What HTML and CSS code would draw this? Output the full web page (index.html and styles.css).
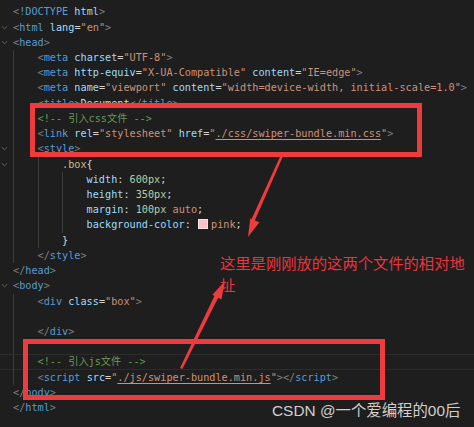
FILE: index.html
```html
<!DOCTYPE html>
<html lang="zh">
<head>
  <meta charset="UTF-8">
  <title>swiper 引入</title>
  <link rel="stylesheet" href="styles.css">
</head>
<body>
  <div class="editor">
    <div class="ln"><span class="gut"></span><span class="code"><span class="p">&lt;</span><span class="t">!DOCTYPE</span> <span class="a">html</span><span class="p">&gt;</span></span></div>
    <div class="ln"><span class="gut"><svg class="fold" viewBox="0 0 8 5"><polyline points="1,1 4,4 7,1"/></svg></span><span class="code"><span class="p">&lt;</span><span class="t">html</span> <span class="a">lang</span><span class="o">=</span><span class="s">"en"</span><span class="p">&gt;</span></span></div>
    <div class="ln"><span class="gut"><svg class="fold" viewBox="0 0 8 5"><polyline points="1,1 4,4 7,1"/></svg></span><span class="code"><span class="p">&lt;</span><span class="t">head</span><span class="p">&gt;</span></span></div>
    <div class="ln"><span class="gut"></span><span class="code"><span class="ind"></span><span class="p">&lt;</span><span class="t">meta</span> <span class="a">charset</span><span class="o">=</span><span class="s">"UTF-8"</span><span class="p">&gt;</span></span></div>
    <div class="ln"><span class="gut"></span><span class="code"><span class="ind"></span><span class="p">&lt;</span><span class="t">meta</span> <span class="a">http-equiv</span><span class="o">=</span><span class="s">"X-UA-Compatible"</span> <span class="a">content</span><span class="o">=</span><span class="s">"IE=edge"</span><span class="p">&gt;</span></span></div>
    <div class="ln"><span class="gut"></span><span class="code"><span class="ind"></span><span class="p">&lt;</span><span class="t">meta</span> <span class="a">name</span><span class="o">=</span><span class="s">"viewport"</span> <span class="a">content</span><span class="o">=</span><span class="s">"width=device-width, initial-scale=1.0"</span><span class="p">&gt;</span></span></div>
    <div class="ln"><span class="gut"></span><span class="code"><span class="ind"></span><span class="p">&lt;</span><span class="t">title</span><span class="p">&gt;</span><span class="o">Document</span><span class="p">&lt;/</span><span class="t">title</span><span class="p">&gt;</span></span></div>
    <div class="ln"><span class="gut"></span><span class="code"><span class="ind"></span><span class="c">&lt;!-- 引入css文件 --&gt;</span></span></div>
    <div class="ln"><span class="gut"></span><span class="code"><span class="ind"></span><span class="p">&lt;</span><span class="t">link</span> <span class="a">rel</span><span class="o">=</span><span class="s">"stylesheet"</span> <span class="a">href</span><span class="o">=</span><span class="s">"<u>./css/swiper-bundle.min.css</u>"</span><span class="p">&gt;</span></span></div>
    <div class="ln"><span class="gut"><svg class="fold" viewBox="0 0 8 5"><polyline points="1,1 4,4 7,1"/></svg></span><span class="code"><span class="ind"></span><span class="p">&lt;</span><span class="t">style</span><span class="p">&gt;</span></span></div>
    <div class="ln"><span class="gut"><svg class="fold" viewBox="0 0 8 5"><polyline points="1,1 4,4 7,1"/></svg></span><span class="code"><span class="ind"></span><span class="ind"></span><span class="sel">.box</span><span class="o">{</span></span></div>
    <div class="ln"><span class="gut"></span><span class="code"><span class="ind"></span><span class="ind"></span><span class="ind"></span><span class="a">width</span><span class="o">: </span><span class="n">600px</span><span class="o">;</span></span></div>
    <div class="ln"><span class="gut"></span><span class="code"><span class="ind"></span><span class="ind"></span><span class="ind"></span><span class="a">height</span><span class="o">: </span><span class="n">350px</span><span class="o">;</span></span></div>
    <div class="ln"><span class="gut"></span><span class="code"><span class="ind"></span><span class="ind"></span><span class="ind"></span><span class="a">margin</span><span class="o">: </span><span class="n">100px</span> <span class="s">auto</span><span class="o">;</span></span></div>
    <div class="ln"><span class="gut"></span><span class="code"><span class="ind"></span><span class="ind"></span><span class="ind"></span><span class="a">background-color</span><span class="o">: </span><span class="swatch"></span><span class="s">pink</span><span class="o">;</span></span></div>
    <div class="ln"><span class="gut"></span><span class="code"><span class="ind"></span><span class="ind"></span><span class="o">}</span></span></div>
    <div class="ln"><span class="gut"></span><span class="code"><span class="ind"></span><span class="p">&lt;/</span><span class="t">style</span><span class="p">&gt;</span></span></div>
    <div class="ln"><span class="gut"></span><span class="code"><span class="p">&lt;/</span><span class="t">head</span><span class="p">&gt;</span></span></div>
    <div class="ln"><span class="gut"><svg class="fold" viewBox="0 0 8 5"><polyline points="1,1 4,4 7,1"/></svg></span><span class="code"><span class="p">&lt;</span><span class="t">body</span><span class="p">&gt;</span></span></div>
    <div class="ln"><span class="gut"></span><span class="code"><span class="ind"></span><span class="p">&lt;</span><span class="t">div</span> <span class="a">class</span><span class="o">=</span><span class="s">"box"</span><span class="p">&gt;</span></span></div>
    <div class="ln"><span class="gut"></span><span class="code"><span class="ind"></span></span></div>
    <div class="ln"><span class="gut"></span><span class="code"><span class="ind"></span><span class="p">&lt;/</span><span class="t">div</span><span class="p">&gt;</span></span></div>
    <div class="ln"><span class="gut"></span><span class="code"><span class="ind"></span></span></div>
    <div class="ln current"><span class="gut"></span><span class="code"><span class="ind"></span><span class="c">&lt;!-- 引入js文件 --&gt;</span></span></div>
    <div class="ln"><span class="gut"></span><span class="code"><span class="ind"></span><span class="p">&lt;</span><span class="t">script</span> <span class="a">src</span><span class="o">=</span><span class="s">"<u>./js/swiper-bundle.min.js</u>"</span><span class="p">&gt;&lt;/</span><span class="t">script</span><span class="p">&gt;</span></span></div>
    <div class="ln"><span class="gut"></span><span class="code"><span class="p">&lt;/</span><span class="t">body</span><span class="p">&gt;</span></span></div>
    <div class="ln"><span class="gut"></span><span class="code"><span class="p">&lt;/</span><span class="t">html</span><span class="p">&gt;</span></span></div>
  </div>

  <!-- annotations drawn over the code -->
  <div class="mark mark-css"></div>
  <div class="mark mark-js"></div>
  <svg class="arrows" viewBox="0 0 474 427">
    <polygon points="282.2,152 284.4,153 254.6,221 251.4,219.6"/>
    <polygon points="248,237 259.4,222.3 250.2,218.5"/>
    <polygon points="180,368 182.4,369 218.8,296.6 215,294.8"/>
    <polygon points="225,281 221.4,299.4 212.4,294.8"/>
  </svg>
  <div class="note">这里是刚刚放的这两个文件的相对地址</div>
  <div class="watermark">CSDN @一个爱编程的00后</div>
</body>
</html>
```

FILE: styles.css
```css
html, body {
  margin: 0;
  height: 100%;
}
body {
  background: #1e1e1e;
  position: relative;
  overflow: hidden;
  font-family: "DejaVu Sans Mono", "Liberation Mono", "Noto Sans CJK SC", monospace;
  font-size: 10.2px;
  color: #d4d4d4;
}
.editor {
  padding-top: 4.4px;
}
.ln {
  display: flex;
  height: 15.23px;
  line-height: 15.23px;
  box-sizing: border-box;
}
.ln.current {
  border-top: 1px solid #2c2c2c;
  border-bottom: 1px solid #2c2c2c;
  line-height: 13.23px;
}
.gut {
  width: 13px;
  flex: none;
  display: flex;
  align-items: center;
}
.fold {
  width: 7px;
  height: 5px;
  margin-left: 1px;
  fill: none;
  stroke: #4e4e4e;
  stroke-width: 1.2;
}
.code {
  white-space: pre;
}
.ind {
  display: inline-block;
  box-sizing: border-box;
  width: 4ch;
  height: 15.23px;
  vertical-align: top;
  border-left: 1px solid #3c3c3c;
}
.p { color: #808080; }
.t { color: #569cd6; }
.a { color: #9cdcfe; }
.o { color: #d4d4d4; }
.s { color: #ce9178; }
.c { color: #6a9955; }
.n { color: #b5cea8; }
.sel { color: #d7ba7d; }
.s u {
  text-decoration-color: #ce9178;
  text-underline-offset: 2px;
}
.swatch {
  display: inline-block;
  width: 8px;
  height: 8px;
  margin: 0 3px 0 1px;
  background: #ffc0cb;
  border: 1px solid #e6e6e6;
  vertical-align: -1px;
}

.mark {
  position: absolute;
  border: 5px solid #ee3b3e;
  box-sizing: border-box;
}
.mark-css {
  left: 30px;
  top: 103px;
  width: 392px;
  height: 54px;
}
.mark-js {
  left: 23px;
  top: 339px;
  width: 362px;
  height: 61px;
}
.arrows {
  position: absolute;
  left: 0;
  top: 0;
  width: 474px;
  height: 427px;
  fill: #ee3b3e;
}
.note {
  position: absolute;
  left: 220px;
  top: 251px;
  width: 248px;
  font-family: "Noto Sans CJK SC", sans-serif;
  font-size: 15.3px;
  line-height: 22px;
  color: #e8343c;
}
.watermark {
  position: absolute;
  left: 272px;
  top: 402px;
  font-family: "Liberation Sans", "Noto Sans CJK SC", sans-serif;
  font-size: 15.4px;
  line-height: 18px;
  color: #cfcfcf;
}
```
